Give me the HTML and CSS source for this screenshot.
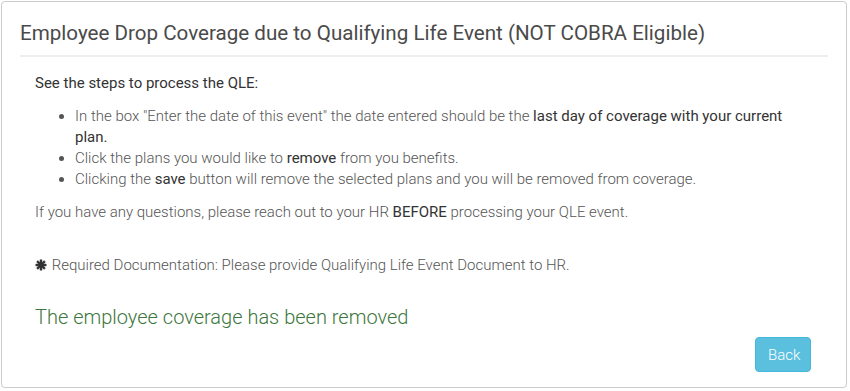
FILE: index.html
```html
<!DOCTYPE html>
<html lang="en">
<head>
    <meta charset="UTF-8">
    <meta name="viewport" content="width=device-width, initial-scale=1.0">
    <title>Employee Drop Coverage</title>
    <link rel="stylesheet" href="styles.css">
</head>
<body>
    <div class="panel">
        <h1 class="panel-title">Employee Drop Coverage due to Qualifying Life Event (NOT COBRA Eligible)</h1>

        <div class="panel-body">
            <p class="steps-title">See the steps to process the QLE:</p>
            <ul class="steps">
                <li>In the box "Enter the date of this event" the date entered should be the <b>last day of coverage with your current plan.</b></li>
                <li>Click the plans you would like to <b>remove</b> from you benefits.</li>
                <li>Clicking the <b>save</b> button will remove the selected plans and you will be removed from coverage.</li>
            </ul>
            <p class="note">If you have any questions, please reach out to your HR <b>BEFORE</b> processing your QLE event.</p>

            <p class="required">
                <svg class="icon-asterisk" viewBox="0 0 12 12" width="12" height="12">
                    <g stroke="#333" stroke-width="2.4" stroke-linecap="butt">
                        <line x1="6" y1="0.5" x2="6" y2="11.5"/>
                        <line x1="0.5" y1="6" x2="11.5" y2="6"/>
                        <line x1="2.1" y1="2.1" x2="9.9" y2="9.9"/>
                        <line x1="9.9" y1="2.1" x2="2.1" y2="9.9"/>
                    </g>
                </svg>
                Required Documentation: Please provide Qualifying Life Event Document to HR.
            </p>

            <p class="success">The employee coverage has been removed</p>
        </div>

        <div class="panel-footer">
            <button class="btn-back">Back</button>
        </div>
    </div>
</body>
</html>
```

FILE: styles.css
```css
body {
    font-family: Roboto, 'Noto Sans', sans-serif;
    background-color: #fff;
    margin: 0;
    padding: 1px 3px 0 1px;
    color: #555;
}

.panel {
    border: 1px solid #ccc;
    border-radius: 4px;
    box-shadow: 0 1px 1px rgba(0, 0, 0, 0.05);
    padding: 20px 18px 15px 18px;
    height: 387px;
    box-sizing: border-box;
    display: flex;
    flex-direction: column;
}

.panel-title {
    font-size: 20.6px;
    font-weight: 400;
    color: #4a4a4a;
    line-height: 23px;
    margin: 0;
    padding-bottom: 10px;
    border-bottom: 2px solid #eee;
}

.panel-body {
    padding: 16px 15px 0 15px;
    font-size: 15px;
    line-height: 21px;
    font-weight: 300;
    flex: 1;
}

.panel-body b {
    font-weight: 400;
    color: #333;
}

.steps-title {
    font-weight: 400;
    color: #333;
    margin: 0 0 12px 0;
}

.steps {
    margin: 0 0 12px 0;
    padding-left: 40px;
}

.note {
    margin: 0 0 32px 0;
}

.required {
    margin: 0 0 29px 0;
}

.icon-asterisk {
    vertical-align: -1px;
    margin-right: 1px;
}

.success {
    font-size: 20px;
    line-height: 24px;
    color: #3c763d;
    margin: 0;
}

.panel-footer {
    display: flex;
    justify-content: flex-end;
    padding-right: 17px;
}

.btn-back {
    font-family: Roboto, sans-serif;
    font-size: 15px;
    font-weight: 300;
    color: #fff;
    background-color: #5bc0de;
    border: 1px solid #46b8da;
    border-radius: 4px;
    padding: 7px 12px;
    width: 56px;
    height: 35px;
}
```
